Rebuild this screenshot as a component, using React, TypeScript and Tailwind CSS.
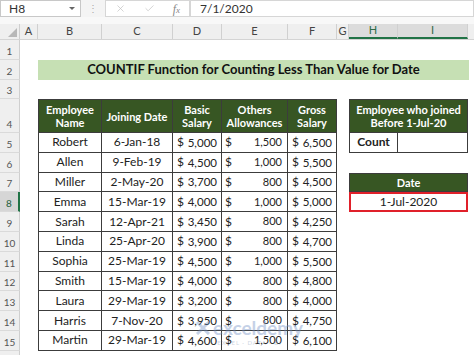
import { X, Check } from 'lucide-react';

type Emp = { name: string; date: string; basic: string; other: string; gross: string };

const employees: Emp[] = [
  { name: 'Robert', date: '6-Jan-18', basic: '5,000', other: '1,500', gross: '6,500' },
  { name: 'Allen', date: '9-Feb-19', basic: '4,500', other: '1,000', gross: '5,500' },
  { name: 'Miller', date: '2-May-20', basic: '3,700', other: '800', gross: '4,500' },
  { name: 'Emma', date: '15-Mar-19', basic: '4,000', other: '1,000', gross: '5,000' },
  { name: 'Sarah', date: '12-Apr-21', basic: '3,450', other: '800', gross: '4,250' },
  { name: 'Linda', date: '25-Apr-20', basic: '3,900', other: '800', gross: '4,700' },
  { name: 'Sophia', date: '25-Mar-19', basic: '4,500', other: '1,000', gross: '5,500' },
  { name: 'Smith', date: '15-Mar-19', basic: '4,000', other: '800', gross: '4,800' },
  { name: 'Laura', date: '29-Mar-19', basic: '3,200', other: '800', gross: '4,000' },
  { name: 'Harris', date: '7-Nov-20', basic: '3,950', other: '800', gross: '4,750' },
  { name: 'Martin', date: '29-Mar-19', basic: '4,600', other: '1,500', gross: '6,100' },
];

const columns = [
  { id: 'A', w: 'w-[18px]' },
  { id: 'B', w: 'w-[64px]' },
  { id: 'C', w: 'w-[71px]' },
  { id: 'D', w: 'w-[49px]' },
  { id: 'E', w: 'w-[66px]' },
  { id: 'F', w: 'w-[49px]' },
  { id: 'G', w: 'w-[12px]' },
  { id: 'H', w: 'w-[49px]' },
  { id: 'I', w: 'w-[70px]' },
];

// row header on the left side of the sheet
function RowHead({ n, active = false }: { n?: number; active?: boolean }) {
  return (
    <div
      className={`w-[20px] shrink-0 flex items-end justify-center pb-[2px] text-[10px] leading-[12px] border-b border-[#dadada] ${
        active
          ? 'bg-[#d6d6d6] text-[#1e5e3a] border-r-2 border-r-[#217346]'
          : 'bg-[#efefef] text-[#555] border-r border-r-[#cfcfcf]'
      }`}
    >
      {n}
    </div>
  );
}

const cell = 'border-r border-b border-[#3c3c3c] flex items-center text-[12px] text-[#222]';
const head = 'border-r border-b border-t border-[#3c3c3c] bg-[#375623] text-white font-bold text-[11px] leading-[13px] flex items-center justify-center text-center';

export default function App() {
  return (
    <div className="relative w-[474px] h-[355px] overflow-hidden bg-white font-['Lato',sans-serif]">
      {/* Formula bar */}
      <div className="flex h-[17px] bg-[#f4f4f4] text-[12px] text-[#333]">
        <div className="w-[81px] h-full bg-white border border-[#c8c8c8] flex items-center justify-between pl-[8px] pr-[5px]">
          <span>H8</span>
          <span className="w-0 h-0 border-l-[3px] border-r-[3px] border-t-[3px] border-l-transparent border-r-transparent border-t-[#666]" />
        </div>
        <div className="w-[24px] flex items-center justify-center text-[#aaa] text-[10px]">⋮</div>
        <div className="w-[85px] h-full bg-white border border-[#d6d6d6] flex items-center justify-around text-[#c0c0c0]">
          <X size={11} strokeWidth={1.5} />
          <Check size={11} strokeWidth={1.5} />
          <span className="font-['Liberation_Serif',serif] italic text-[12px] text-[#888]">f<span className="text-[9px]">x</span></span>
        </div>
        <div className="flex-1 h-full bg-white border border-[#d6d6d6] flex items-center pl-[9px]">7/1/2020</div>
      </div>
      <div className="h-[7px] bg-[#f8f8f8]" />

      {/* Column headers */}
      <div className="flex h-[16px] bg-[#efefef] text-[11px] text-[#444] border-b border-[#d4d4d4]">
        <div className="w-[20px] shrink-0 relative border-r border-[#cfcfcf]">
          <svg className="absolute right-[2px] bottom-[2px]" width="9" height="9" viewBox="0 0 9 9">
            <polygon points="9,0 9,9 0,9" fill="#b8b8b8" />
          </svg>
        </div>
        {columns.map(c => {
          const sel = c.id === 'H' || c.id === 'I';
          return (
            <div
              key={c.id}
              className={`${c.w} shrink-0 flex items-center justify-center border-r border-[#d0d0d0] ${
                sel ? 'bg-[#dcdcdc] text-[#2f6b45] border-b-2 border-b-[#217346]' : ''
              }`}
            >
              {c.id}
            </div>
          );
        })}
        <div className="flex-1" />
      </div>

      {/* Row 1 */}
      <div className="flex h-[20px]">
        <RowHead n={1} />
      </div>

      {/* Row 2 title */}
      <div className="flex h-[20px]">
        <RowHead n={2} />
        <div className="w-[18px]" />
        <div className="w-[431px] bg-[#c6e0b4] flex items-center justify-center font-bold text-[13px] text-[#111]">
          COUNTIF Function for Counting Less Than Value for Date
        </div>
      </div>

      {/* Row 3 */}
      <div className="flex h-[19px]">
        <RowHead n={3} />
      </div>

      {/* Row 4 headers */}
      <div className="flex h-[34px]">
        <RowHead n={4} />
        <div className="w-[18px]" />
        <div className={`w-[64px] border-l ${head}`}>Employee<br />Name</div>
        <div className={`w-[71px] ${head}`}>Joining Date</div>
        <div className={`w-[49px] ${head}`}>Basic<br />Salary</div>
        <div className={`w-[66px] ${head}`}>Others<br />Allowances</div>
        <div className={`w-[49px] ${head}`}>Gross<br />Salary</div>
        <div className="w-[12px]" />
        <div className={`w-[119px] border-l ${head}`}>Employee who joined<br />Before 1-Jul-20</div>
      </div>

      {employees.map((e, i) => (
        <div key={e.name} className="flex h-[19.8px]">
          <RowHead n={i + 5} active={i === 3} />
          <div className="w-[18px]" />
          <div className={`w-[64px] border-l justify-center ${cell}`}>{e.name}</div>
          <div className={`w-[71px] justify-center ${cell}`}>{e.date}</div>
          <div className={`w-[49px] justify-between pl-[4px] pr-[4px] ${cell}`}>
            <span>$</span>
            <span className="text-[11.5px]">{e.basic}</span>
          </div>
          <div className={`w-[66px] justify-between pl-[3px] pr-[5px] ${cell}`}>
            <span>$</span>
            <span className="text-[11px]">{e.other}</span>
          </div>
          <div className={`w-[49px] justify-between pl-[4px] pr-[4px] ${cell}`}>
            <span>$</span>
            <span className="text-[11.5px]">{e.gross}</span>
          </div>
          <div className="w-[12px]" />
          {i === 0 && (
            <>
              <div className={`w-[49px] border-l justify-center font-bold text-[11px] ${cell}`}>Count</div>
              <div className={`w-[70px] ${cell}`} />
            </>
          )}
          {i === 2 && <div className={`w-[119px] border-l ${head}`}>Date</div>}
          {i === 3 && (
            <div className="w-[119px] border-2 border-[#e0202a] flex items-center justify-center text-[12px] text-[#222]">
              1-Jul-2020
            </div>
          )}
        </div>
      ))}
      <div className="flex h-[10px]">
        <RowHead />
      </div>

      {/* watermark */}
      <div className="absolute left-[196px] top-[318px] flex flex-col items-center opacity-40 pointer-events-none">
        <div className="flex items-center gap-[3px] text-[#6f8fc4] font-bold text-[19px] leading-[20px]">
          <svg width="14" height="14" viewBox="0 0 14 14">
            <path d="M1 1 L7 7 L1 13 M13 1 L7 7 L13 13" stroke="#6f8fc4" strokeWidth="3" fill="none" />
          </svg>
          exceldemy
        </div>
        <div className="text-[6px] tracking-[1px] text-[#8a9ab8]">EXCEL · DATA · BI</div>
      </div>
    </div>
  );
}
